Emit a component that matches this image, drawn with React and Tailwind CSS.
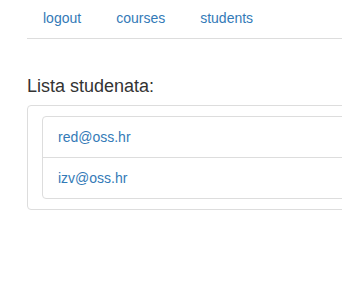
export default function App() {
  const students = ["red@oss.hr", "izv@oss.hr"];

  return (
    <div className="h-[285px] w-full overflow-hidden bg-white font-['Liberation_Sans',Arial,sans-serif] text-[14px] text-[#333]">
      <div className="w-[420px] pl-[27px]">
        {/* NAV */}
        <ul className="flex h-[39px] border-b border-[#ddd]">
          {["logout", "courses", "students"].map((l) => (
            <li key={l} className="mr-[3px]">
              <a href="#" className="block px-4 pt-[8px] pb-[10px] leading-[20px] text-[#337ab7]">
                {l}
              </a>
            </li>
          ))}
        </ul>

        <h4 className="mt-[37px] mb-[9px] text-[18px] leading-[20px]">Lista studenata:</h4>

        {/* PANEL */}
        <div className="rounded border border-[#ddd] px-[14px] py-[10px]">
          <div className="rounded border border-[#ddd]">
            {students.map((s, i) => (
              <div
                key={s}
                className={`px-[15px] py-[10px] leading-[20px] ${i > 0 ? "border-t border-[#ddd]" : ""}`}
              >
                <a href="#" className="text-[#337ab7]">{s}</a>
              </div>
            ))}
          </div>
        </div>
      </div>
    </div>
  );
}
